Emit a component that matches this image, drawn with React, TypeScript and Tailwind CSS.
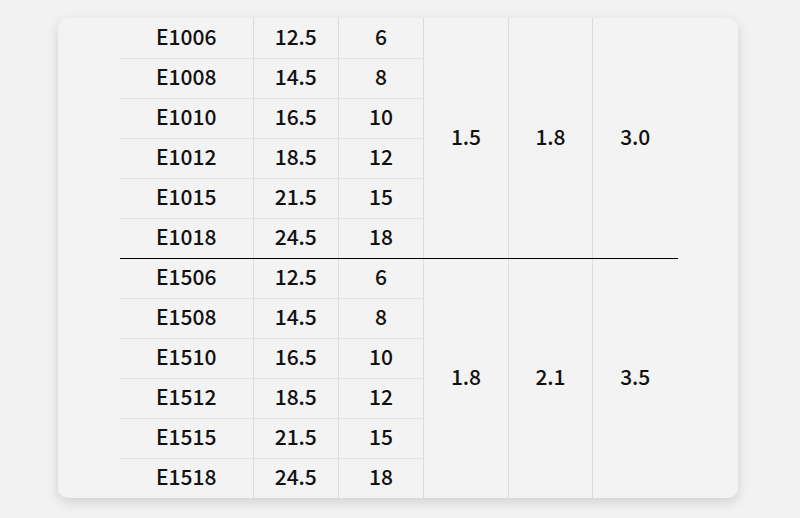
const GROUPS = [
  {
    rows: [
      ["E1006", "12.5", "6"],
      ["E1008", "14.5", "8"],
      ["E1010", "16.5", "10"],
      ["E1012", "18.5", "12"],
      ["E1015", "21.5", "15"],
      ["E1018", "24.5", "18"],
    ],
    merged: ["1.5", "1.8", "3.0"],
  },
  {
    rows: [
      ["E1506", "12.5", "6"],
      ["E1508", "14.5", "8"],
      ["E1510", "16.5", "10"],
      ["E1512", "18.5", "12"],
      ["E1515", "21.5", "15"],
      ["E1518", "24.5", "18"],
    ],
    merged: ["1.8", "2.1", "3.5"],
  },
]

const WIDTHS = ["w-[133px]", "w-[85.5px]", "w-[85px]", "w-[85px]", "w-[84px]", "w-[85px]"]

export default function App() {
  return (
    <div
      className="w-[800px] h-[518px] bg-[#f2f2f2] pt-[18px] pl-[58px]"
      style={{ fontFamily: '"Noto Sans CJK SC", "Noto Sans", sans-serif' }}
    >
      <div className="w-[680px] h-[480px] bg-[#f3f3f3] rounded-[10px] shadow-[0_4px_12px_rgba(0,0,0,0.14)] pl-[62px] overflow-hidden">
        <table className="border-collapse text-[21px] font-medium text-[#111]">
          <tbody>
            {GROUPS.map((g, gi) =>
              g.rows.map((r, ri) => {
                const last = ri === g.rows.length - 1
                const bottom = last
                  ? gi === 0
                    ? "border-b border-b-black"
                    : ""
                  : "border-b border-b-[#e2e2e2]"
                return (
                  <tr key={`${gi}-${ri}`} className="h-10">
                    {r.map((v, ci) => (
                      <td
                        key={ci}
                        className={`${WIDTHS[ci]} p-0 pb-[3px] text-center leading-none ${bottom} ${ci > 0 ? "border-l border-l-[#dcdcdc]" : ""}`}
                      >
                        {v}
                      </td>
                    ))}
                    {ri === 0 &&
                      g.merged.map((v, mi) => (
                        <td
                          key={`m${mi}`}
                          rowSpan={g.rows.length}
                          className={`${WIDTHS[mi + 3]} p-0 pb-[3px] text-center leading-none border-l border-l-[#dcdcdc] ${gi === 0 ? "border-b border-b-black" : ""}`}
                        >
                          {v}
                        </td>
                      ))}
                  </tr>
                )
              })
            )}
          </tbody>
        </table>
      </div>
    </div>
  )
}
